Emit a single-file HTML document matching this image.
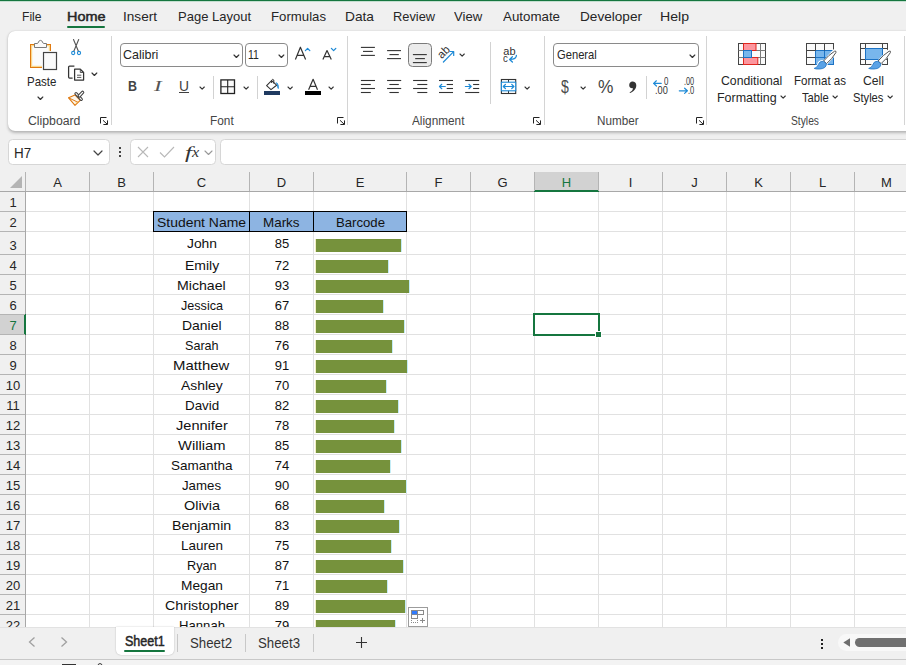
<!DOCTYPE html>
<html><head><meta charset="utf-8"><title>Excel</title>
<style>
html,body{margin:0;padding:0;}
body{width:906px;height:665px;overflow:hidden;position:relative;background:#f0f0f0;font-family:"Liberation Sans",sans-serif;}
.a{position:absolute;display:block;}
.t{position:absolute;white-space:nowrap;transform-origin:left center;}
</style></head><body>

<div class="a" style="left:0px;top:0px;width:906px;height:1px;background:#15763f;"></div>
<div class="a" style="left:0px;top:1px;width:906px;height:1px;background:#c4dfd0;"></div>
<div class="t" style="left:21.60px;top:6.50px;font-size:13.5px;line-height:20px;color:#262626;transform:scaleX(0.8965);">File</div>
<div class="t" style="left:66.80px;top:6.50px;font-size:13.5px;line-height:20px;color:#262626;-webkit-text-stroke:0.5px #262626;transform:scaleX(1.0691);">Home</div>
<div class="t" style="left:123.20px;top:6.50px;font-size:13.5px;line-height:20px;color:#262626;transform:scaleX(1.0070);">Insert</div>
<div class="t" style="left:178.20px;top:6.50px;font-size:13.5px;line-height:20px;color:#262626;transform:scaleX(0.9629);">Page Layout</div>
<div class="t" style="left:271.20px;top:6.50px;font-size:13.5px;line-height:20px;color:#262626;transform:scaleX(0.9776);">Formulas</div>
<div class="t" style="left:345.20px;top:6.50px;font-size:13.5px;line-height:20px;color:#262626;transform:scaleX(1.0170);">Data</div>
<div class="t" style="left:393.20px;top:6.50px;font-size:13.5px;line-height:20px;color:#262626;transform:scaleX(0.9489);">Review</div>
<div class="t" style="left:453.80px;top:6.50px;font-size:13.5px;line-height:20px;color:#262626;transform:scaleX(0.9719);">View</div>
<div class="t" style="left:502.60px;top:6.50px;font-size:13.5px;line-height:20px;color:#262626;transform:scaleX(0.9864);">Automate</div>
<div class="t" style="left:580.20px;top:6.50px;font-size:13.5px;line-height:20px;color:#262626;transform:scaleX(1.0076);">Developer</div>
<div class="t" style="left:660.20px;top:6.50px;font-size:13.5px;line-height:20px;color:#262626;transform:scaleX(1.0445);">Help</div>
<div class="a" style="left:67px;top:26px;width:38px;height:2px;background:#15763f;border-radius:1px;"></div>
<div class="a" style="left:8px;top:30.5px;width:920px;height:100px;background:#fff;border-radius:7px;box-shadow:0 1.5px 3px rgba(0,0,0,0.24),0 0 1px rgba(0,0,0,0.15);"></div>
<div class="a" style="left:111px;top:36px;width:1px;height:89px;background:#d4d4d4;"></div>
<div class="a" style="left:346.5px;top:36px;width:1px;height:89px;background:#d4d4d4;"></div>
<div class="a" style="left:544px;top:36px;width:1px;height:89px;background:#d4d4d4;"></div>
<div class="a" style="left:706px;top:36px;width:1px;height:89px;background:#d4d4d4;"></div>
<div class="a" style="left:904px;top:36px;width:1px;height:89px;background:#d4d4d4;"></div>
<div class="t" style="left:27.60px;top:111.20px;font-size:12px;line-height:20px;color:#454545;transform:scaleX(1.0202);">Clipboard</div>
<div class="t" style="left:210.00px;top:111.20px;font-size:12px;line-height:20px;color:#454545;transform:scaleX(0.9870);">Font</div>
<div class="t" style="left:412.30px;top:111.20px;font-size:12px;line-height:20px;color:#454545;transform:scaleX(0.9820);">Alignment</div>
<div class="t" style="left:596.80px;top:111.20px;font-size:12px;line-height:20px;color:#454545;transform:scaleX(0.9747);">Number</div>
<div class="t" style="left:791.40px;top:111.20px;font-size:12px;line-height:20px;color:#454545;transform:scaleX(0.8569);">Styles</div>
<svg class="a" style="left:100px;top:117px" width="9" height="9" viewBox="0 0 9 9"><path d="M0.5 6.5 V0.5 H6.5 M3 3.3 L7.2 7.2 M7.5 3.4 V7.5 H3.4" fill="none" stroke="#222" stroke-width="1"/></svg>
<svg class="a" style="left:336.5px;top:117px" width="9" height="9" viewBox="0 0 9 9"><path d="M0.5 6.5 V0.5 H6.5 M3 3.3 L7.2 7.2 M7.5 3.4 V7.5 H3.4" fill="none" stroke="#222" stroke-width="1"/></svg>
<svg class="a" style="left:533px;top:117px" width="9" height="9" viewBox="0 0 9 9"><path d="M0.5 6.5 V0.5 H6.5 M3 3.3 L7.2 7.2 M7.5 3.4 V7.5 H3.4" fill="none" stroke="#222" stroke-width="1"/></svg>
<svg class="a" style="left:695.5px;top:117px" width="9" height="9" viewBox="0 0 9 9"><path d="M0.5 6.5 V0.5 H6.5 M3 3.3 L7.2 7.2 M7.5 3.4 V7.5 H3.4" fill="none" stroke="#222" stroke-width="1"/></svg>
<svg class="a" style="left:28px;top:38px" width="32" height="34" viewBox="28 38 32 34"><rect x="30.5" y="44.5" width="20" height="23" fill="#fbfbfb" stroke="#e07a10"/><rect x="31.6" y="45.6" width="17.8" height="20.8" fill="none" stroke="#fad88c" stroke-width="1.2"/><path d="M34.5 47.5 V43.5 H37.3 C38.7 43.5 38.1 40.4 40.5 40.4 C42.9 40.4 42.3 43.5 43.7 43.5 H46.5 V47.5 Z" fill="#fafafa" stroke="#7a7a7a"/><rect x="42" y="51" width="16" height="20" fill="#fff"/><rect x="43.5" y="52.5" width="13" height="17" fill="#fafafa" stroke="#444" stroke-width="1.2"/></svg>
<div class="t" style="left:26.80px;top:71.60px;font-size:13.5px;line-height:20px;color:#262626;transform:scaleX(0.8516);">Paste</div>
<svg class="a" style="left:37.10px;top:95.75px" width="6.8" height="4.5" viewBox="-1 -1 6.8 4.5"><path d="M0 0 L2.4 2.5 L4.8 0" fill="none" stroke="#333" stroke-width="1.15" stroke-linecap="round" stroke-linejoin="round"/></svg>
<svg class="a" style="left:68px;top:36px" width="16" height="22" viewBox="68 36 16 22"><path d="M73.5 39.5 L78.4 51.2 M78.7 39.5 L73.8 51.2" stroke="#555" stroke-width="1.1" fill="none" stroke-linecap="round"/><circle cx="73.2" cy="53" r="1.6" fill="none" stroke="#1e8ad6" stroke-width="1.1"/><circle cx="79" cy="53" r="1.6" fill="none" stroke="#1e8ad6" stroke-width="1.1"/></svg>
<svg class="a" style="left:66px;top:63px" width="20" height="20" viewBox="66 63 20 20"><path d="M74.4 66.1 H69.6 Q68.6 66.1 68.6 67.1 V77 Q68.6 78 69.6 78 H72.6" fill="none" stroke="#333" stroke-width="1.25"/><path d="M74.6 69.2 H80.3 L83.6 72.5 V80.1 H74.6 Z" fill="#fff" stroke="#333" stroke-width="1.25" stroke-linejoin="round"/><path d="M80.3 69.2 V72.5 H83.6" fill="none" stroke="#444" stroke-width="0.9"/><path d="M77 75.2 H81.3 M77 77.4 H81.3" stroke="#444" stroke-width="0.9"/></svg>
<svg class="a" style="left:90.90px;top:71.75px" width="6.8" height="4.5" viewBox="-1 -1 6.8 4.5"><path d="M0 0 L2.4 2.5 L4.8 0" fill="none" stroke="#333" stroke-width="1.15" stroke-linecap="round" stroke-linejoin="round"/></svg>
<svg class="a" style="left:66px;top:88px" width="22" height="22" viewBox="66 88 22 22"><path d="M74.9 94.9 L68.6 97.8 L75 105.3 L80.2 100.4 Z" fill="#fdf7ee" stroke="#e07a10" stroke-width="1.1" stroke-linejoin="round"/><path d="M68.6 97.8 L78 102.3" stroke="#e07a10" stroke-width="1" fill="none"/><path d="M74.6 103.8 L76.3 101.8 L77.8 102.6 Z" fill="#fbd98a"/><path d="M76 93.6 L81.3 99.4" stroke="#444" stroke-width="3.2" stroke-linecap="round"/><path d="M76 93.6 L81.3 99.4" stroke="#fff" stroke-width="1.1" stroke-linecap="round"/><path d="M79.2 96 L82.6 92.4" stroke="#444" stroke-width="3.4" stroke-linecap="round"/><path d="M79.4 95.8 L82.6 92.4" stroke="#fff" stroke-width="1.3" stroke-linecap="round"/></svg>
<div class="a" style="left:120px;top:43px;width:123px;height:23.5px;background:#fff;border:1px solid #8a8a8a;border-radius:4px;box-sizing:border-box;"></div>
<div class="t" style="left:122.80px;top:45.20px;font-size:13px;line-height:20px;color:#262626;transform:scaleX(0.9608);">Calibri</div>
<svg class="a" style="left:233.30px;top:53.85px" width="6.8" height="4.5" viewBox="-1 -1 6.8 4.5"><path d="M0 0 L2.4 2.5 L4.8 0" fill="none" stroke="#333" stroke-width="1.15" stroke-linecap="round" stroke-linejoin="round"/></svg>
<div class="a" style="left:245px;top:43px;width:42.5px;height:23.5px;background:#fff;border:1px solid #8a8a8a;border-radius:4px;box-sizing:border-box;"></div>
<div class="t" style="left:247.80px;top:45.20px;font-size:13px;line-height:20px;color:#262626;transform:scaleX(0.8076);">11</div>
<svg class="a" style="left:278.30px;top:53.85px" width="6.8" height="4.5" viewBox="-1 -1 6.8 4.5"><path d="M0 0 L2.4 2.5 L4.8 0" fill="none" stroke="#333" stroke-width="1.15" stroke-linecap="round" stroke-linejoin="round"/></svg>
<svg class="a" style="left:292px;top:44px" width="48" height="18" viewBox="292 44 48 18"><path d="M295.4 59.5 L300.4 47.2 L305.6 59.5 M297.2 55.3 H303.7" fill="none" stroke="#333" stroke-width="1.2" stroke-linejoin="round"/><path d="M305.4 50.6 L307.6 48.4 L309.8 50.6" fill="none" stroke="#1e8ad6" stroke-width="1.3" stroke-linecap="round" stroke-linejoin="round"/><path d="M322.9 59.5 L327 50.5 L331.3 59.5 M324.3 56.6 H329.9" fill="none" stroke="#333" stroke-width="1.2" stroke-linejoin="round"/><path d="M331.4 48.4 L333.6 50.6 L335.8 48.4" fill="none" stroke="#1e8ad6" stroke-width="1.3" stroke-linecap="round" stroke-linejoin="round"/></svg>
<div class="t" style="left:127.80px;top:76.40px;font-size:14.3px;line-height:20px;color:#444;font-weight:bold;transform:scaleX(0.8707);">B</div>
<div class="t" style="left:154.20px;top:76.00px;font-size:14.2px;line-height:20px;color:#555;font-style:italic;font-family:'Liberation Serif', serif;transform:scaleX(1.6086);">I</div>
<div class="t" style="left:178.60px;top:76.00px;font-size:14.3px;line-height:20px;color:#404040;transform:scaleX(0.9675);">U</div>
<div class="a" style="left:179px;top:92px;width:9.5px;height:1px;background:#404040;"></div>
<svg class="a" style="left:199.15px;top:85.60px" width="6.3" height="4.2" viewBox="-1 -1 6.3 4.2"><path d="M0 0 L2.15 2.2 L4.3 0" fill="none" stroke="#333" stroke-width="1.1" stroke-linecap="round" stroke-linejoin="round"/></svg>
<div class="a" style="left:213px;top:75.5px;width:1px;height:23px;background:#d2d2d2;"></div>
<svg class="a" style="left:219px;top:78px" width="18" height="18" viewBox="219 78 18 18"><rect x="220.9" y="79.9" width="13.6" height="13.6" fill="#fafafa" stroke="#222" stroke-width="1.3"/><path d="M227.7 80 V93.5 M221 86.7 H234.5" stroke="#222" stroke-width="1.1"/></svg>
<svg class="a" style="left:243.15px;top:85.60px" width="6.3" height="4.2" viewBox="-1 -1 6.3 4.2"><path d="M0 0 L2.15 2.2 L4.3 0" fill="none" stroke="#333" stroke-width="1.1" stroke-linecap="round" stroke-linejoin="round"/></svg>
<div class="a" style="left:257px;top:75.5px;width:1px;height:23px;background:#d2d2d2;"></div>
<div class="a" style="left:264px;top:91px;width:16px;height:3.7px;background:#1f3a60;"></div>
<svg class="a" style="left:264px;top:78px" width="18" height="13" viewBox="264 78 18 13"><path d="M266.6 85.6 L271.6 80.6 L276.6 85.2 L271 89.6 Z" fill="#fff" stroke="#333" stroke-width="1.1" stroke-linejoin="round"/><path d="M271.6 83 V80.2 Q272.6 78.6 273.8 80 V83.6" fill="none" stroke="#333" stroke-width="1"/><path d="M276.4 82.6 Q279 84.5 278.3 88.6 Q277.2 86.5 277.4 84.6 Z" fill="#1e8ad6" stroke="#1e8ad6" stroke-width="0.8"/></svg>
<svg class="a" style="left:287.35px;top:85.60px" width="6.3" height="4.2" viewBox="-1 -1 6.3 4.2"><path d="M0 0 L2.15 2.2 L4.3 0" fill="none" stroke="#333" stroke-width="1.1" stroke-linecap="round" stroke-linejoin="round"/></svg>
<div class="a" style="left:305px;top:91px;width:16px;height:3.8px;background:#000;"></div>
<svg class="a" style="left:306px;top:77px" width="14" height="14" viewBox="306 77 14 14"><path d="M308.6 89.7 L313.1 79.3 L317.5 89.7 M310 86.4 H316.1" fill="none" stroke="#333" stroke-width="1.2" stroke-linejoin="round"/></svg>
<svg class="a" style="left:328.35px;top:85.60px" width="6.3" height="4.2" viewBox="-1 -1 6.3 4.2"><path d="M0 0 L2.15 2.2 L4.3 0" fill="none" stroke="#333" stroke-width="1.1" stroke-linecap="round" stroke-linejoin="round"/></svg>
<div class="a" style="left:408px;top:43px;width:24px;height:24px;background:#ebebeb;border:1px solid #7a7a7a;border-radius:4.5px;box-sizing:border-box;"></div>
<svg class="a" style="left:356px;top:40px" width="130" height="60" viewBox="356 40 130 60"><path d="M360.9 47.4 H374.9" stroke="#333" stroke-width="1.1"/><path d="M363 51.4 H372.8" stroke="#333" stroke-width="1.1"/><path d="M360.9 55.4 H374.9" stroke="#333" stroke-width="1.1"/><path d="M387.1 50.6 H401" stroke="#333" stroke-width="1.1"/><path d="M389.5 54.6 H398.8" stroke="#333" stroke-width="1.1"/><path d="M387.1 58.6 H401" stroke="#333" stroke-width="1.1"/><path d="M360.9 80.5 H375" stroke="#333" stroke-width="1.1"/><path d="M360.9 84.5 H370.8" stroke="#333" stroke-width="1.1"/><path d="M360.9 88.5 H375" stroke="#333" stroke-width="1.1"/><path d="M360.9 92.5 H370.8" stroke="#333" stroke-width="1.1"/><path d="M387.1 80.5 H401.2" stroke="#333" stroke-width="1.1"/><path d="M389.4 84.5 H398.8" stroke="#333" stroke-width="1.1"/><path d="M387.1 88.5 H401.2" stroke="#333" stroke-width="1.1"/><path d="M389.4 92.5 H398.8" stroke="#333" stroke-width="1.1"/><path d="M413.1 80.5 H427.3" stroke="#333" stroke-width="1.1"/><path d="M417.3 84.5 H427.3" stroke="#333" stroke-width="1.1"/><path d="M413.1 88.5 H427.3" stroke="#333" stroke-width="1.1"/><path d="M417.3 92.5 H427.3" stroke="#333" stroke-width="1.1"/><path d="M439 80.5 H453" stroke="#333" stroke-width="1.1"/><path d="M446.7 84.5 H453" stroke="#333" stroke-width="1.1"/><path d="M446.7 88.5 H453" stroke="#333" stroke-width="1.1"/><path d="M439 92.5 H453" stroke="#333" stroke-width="1.1"/><path d="M445.3 86.5 H439.6 M441.8 84.3 L439.5 86.5 L441.8 88.7" fill="none" stroke="#1e8ad6" stroke-width="1.2" stroke-linecap="round" stroke-linejoin="round"/><path d="M465.2 80.5 H479.2" stroke="#333" stroke-width="1.1"/><path d="M473.1 84.5 H479.2" stroke="#333" stroke-width="1.1"/><path d="M473.1 88.5 H479.2" stroke="#333" stroke-width="1.1"/><path d="M465.2 92.5 H479.2" stroke="#333" stroke-width="1.1"/><path d="M465.4 86.5 H471.1 M468.9 84.3 L471.2 86.5 L468.9 88.7" fill="none" stroke="#1e8ad6" stroke-width="1.2" stroke-linecap="round" stroke-linejoin="round"/></svg>
<svg class="a" style="left:408px;top:43px" width="24" height="24" viewBox="408 43 24 24"><path d="M412.9 54.6 H426.8" stroke="#333" stroke-width="1.1"/><path d="M415.2 58.6 H424.9" stroke="#333" stroke-width="1.1"/><path d="M412.9 62.6 H426.8" stroke="#333" stroke-width="1.1"/></svg>
<div class="t" style="left:436.5px;top:45.2px;font-size:11.5px;line-height:14px;color:#333;transform-origin:center center;transform:rotate(-45deg);">ab</div>
<svg class="a" style="left:440px;top:46px" width="18" height="18" viewBox="440 46 18 18"><path d="M443.4 62 L453.4 51.8 M449.8 51.5 H453.7 V55.4" fill="none" stroke="#1e8ad6" stroke-width="1.2" stroke-linecap="round" stroke-linejoin="round"/></svg>
<svg class="a" style="left:459.35px;top:53.10px" width="6.3" height="4.2" viewBox="-1 -1 6.3 4.2"><path d="M0 0 L2.15 2.2 L4.3 0" fill="none" stroke="#333" stroke-width="1.1" stroke-linecap="round" stroke-linejoin="round"/></svg>
<div class="a" style="left:490.3px;top:42px;width:1px;height:62px;background:#d2d2d2;"></div>
<div class="t" style="left:503.30px;top:40.80px;font-size:11px;line-height:20px;color:#333;">ab</div>
<div class="t" style="left:503.30px;top:47.70px;font-size:11px;line-height:20px;color:#333;transform:scaleX(0.8727);">c</div>
<svg class="a" style="left:506px;top:52px" width="14" height="12" viewBox="506 52 14 12"><path d="M516.4 55.3 Q516.6 59.3 509.8 59.4 M512.4 56.8 L509.6 59.4 L512.4 62" fill="none" stroke="#1e8ad6" stroke-width="1.3" stroke-linecap="round" stroke-linejoin="round"/></svg>
<svg class="a" style="left:499px;top:77px" width="20" height="19" viewBox="499 77 20 19"><rect x="501.4" y="79.5" width="14.3" height="14" fill="#fff" stroke="#333" stroke-width="1.1"/><path d="M508.5 79.5 V93.5" stroke="#333" stroke-width="1"/><rect x="501.4" y="82.2" width="14.3" height="8.6" fill="#fff" stroke="#1e8ad6" stroke-width="1.1"/><path d="M503.4 86.5 H513.8 M505.4 84.5 L503.3 86.5 L505.4 88.5 M511.8 84.5 L513.9 86.5 L511.8 88.5" fill="none" stroke="#1e8ad6" stroke-width="1.2" stroke-linecap="round" stroke-linejoin="round"/></svg>
<svg class="a" style="left:524.25px;top:85.70px" width="6.3" height="4.2" viewBox="-1 -1 6.3 4.2"><path d="M0 0 L2.15 2.2 L4.3 0" fill="none" stroke="#333" stroke-width="1.1" stroke-linecap="round" stroke-linejoin="round"/></svg>
<div class="a" style="left:553px;top:43px;width:145.8px;height:24px;background:#fff;border:1px solid #8a8a8a;border-radius:4px;box-sizing:border-box;"></div>
<div class="t" style="left:556.80px;top:45.20px;font-size:13px;line-height:20px;color:#262626;transform:scaleX(0.8605);">General</div>
<svg class="a" style="left:689.00px;top:53.85px" width="6.8" height="4.5" viewBox="-1 -1 6.8 4.5"><path d="M0 0 L2.4 2.5 L4.8 0" fill="none" stroke="#333" stroke-width="1.15" stroke-linecap="round" stroke-linejoin="round"/></svg>
<div class="t" style="left:560.60px;top:77.30px;font-size:17.5px;line-height:20px;color:#4a4a4a;transform:scaleX(0.8014);">$</div>
<svg class="a" style="left:580.25px;top:85.60px" width="6.3" height="4.2" viewBox="-1 -1 6.3 4.2"><path d="M0 0 L2.15 2.2 L4.3 0" fill="none" stroke="#333" stroke-width="1.1" stroke-linecap="round" stroke-linejoin="round"/></svg>
<div class="t" style="left:598.30px;top:77.00px;font-size:17.5px;line-height:20px;color:#444;transform:scaleX(0.9897);">%</div>
<svg class="a" style="left:627px;top:80px" width="12" height="15" viewBox="627 80 12 15"><path d="M631.9 81.6 C634.2 81.3 636.4 82.8 636.3 85.6 C636.2 89 633.6 91.8 630 93 L629.6 92.2 C631.8 91.2 633 89.6 633 88.2 C630.8 88.6 629.2 87.2 629.2 85.2 C629.2 83.2 630.4 81.9 631.9 81.6 Z" fill="#333"/></svg>
<div class="a" style="left:646px;top:75.5px;width:1px;height:23px;background:#d2d2d2;"></div>
<svg class="a" style="left:652px;top:80px" width="10" height="8" viewBox="652 80 10 8"><path d="M661.2 83.4 H653.6 M656.4 80.8 L653.6 83.4 L656.4 86" fill="none" stroke="#1e8ad6" stroke-width="1.2" stroke-linecap="round" stroke-linejoin="round"/></svg>
<div class="t" style="left:663.70px;top:72.40px;font-size:10.2px;line-height:20px;color:#333;transform:scaleX(0.7766);">0</div>
<div class="t" style="left:655.20px;top:80.80px;font-size:10.2px;line-height:20px;color:#333;transform:scaleX(0.9038);">.00</div>
<div class="t" style="left:684.10px;top:72.40px;font-size:10.2px;line-height:20px;color:#333;transform:scaleX(0.7202);">.00</div>
<svg class="a" style="left:678px;top:87px" width="11" height="8" viewBox="678 87 11 8"><path d="M679.3 90.8 H687.4 M684.6 88.2 L687.4 90.8 L684.6 93.4" fill="none" stroke="#1e8ad6" stroke-width="1.2" stroke-linecap="round" stroke-linejoin="round"/></svg>
<div class="t" style="left:688.00px;top:80.80px;font-size:10.2px;line-height:20px;color:#333;transform:scaleX(0.7415);">.0</div>
<svg class="a" style="left:736px;top:41px" width="32" height="26" viewBox="736 41 32 26"><rect x="738.5" y="43.5" width="27" height="21" fill="#fafafa" stroke="#444"/><path d="M743.5 43.5 V64.5 M760.5 43.5 V64.5 M738.5 50.5 H765.5 M738.5 57.5 H765.5" stroke="#7a7a7a" stroke-width="1" fill="none"/><rect x="743.5" y="43.5" width="12.5" height="7" fill="#fc969e" stroke="#e0261e"/><rect x="743.5" y="57.5" width="14.3" height="7" fill="#fc969e" stroke="#e0261e"/><rect x="743.5" y="50.5" width="8" height="7" fill="#78b6ec" stroke="#1c72c4"/></svg>
<div class="t" style="left:721.00px;top:71.30px;font-size:13.5px;line-height:20px;color:#262626;transform:scaleX(0.9076);">Conditional</div>
<div class="t" style="left:717.00px;top:88.00px;font-size:13.5px;line-height:20px;color:#262626;transform:scaleX(0.9237);">Formatting</div>
<svg class="a" style="left:779.65px;top:94.90px" width="6.3" height="4.2" viewBox="-1 -1 6.3 4.2"><path d="M0 0 L2.15 2.2 L4.3 0" fill="none" stroke="#333" stroke-width="1.1" stroke-linecap="round" stroke-linejoin="round"/></svg>
<svg class="a" style="left:804px;top:41px" width="36" height="30" viewBox="804 41 36 30"><rect x="806.5" y="43.5" width="27" height="21" fill="#fafafa" stroke="#444"/><rect x="815.5" y="50.5" width="18" height="14" fill="#78b6ec" stroke="#1c72c4"/><path d="M824.5 50.5 V64.5 M815.5 57.5 H833.5" stroke="#1c72c4" stroke-width="1"/><path d="M815.5 43.5 V50.5 M824.5 43.5 V50.5 M806.5 50.5 H815.5 M806.5 57.5 H815.5" stroke="#444" stroke-width="1" fill="none"/><g transform="translate(0 0)"><path d="M835.4 51.4 L825 62.6" stroke="#fff" stroke-width="5.5" stroke-linecap="round"/><path d="M823.4 61.2 L826.4 63.8 Q826.4 68.6 819.6 69 Q815.6 69.2 814.2 68.4 Q817.6 67.6 818.4 64.4 Q819.4 61 823.4 61.2 Z" fill="#fff" stroke="#fff" stroke-width="2.6"/><path d="M834.6 51.2 Q836.4 50.4 835.9 52.6 Q832 59 826.6 63.6 L823.6 61 Q828.6 55 834.6 51.2 Z" fill="#fff" stroke="#555" stroke-width="1"/><path d="M823.4 61.2 L826.4 63.8 Q826.4 68.6 819.6 69 Q815.6 69.2 814.2 68.4 Q817.6 67.6 818.4 64.4 Q819.4 61 823.4 61.2 Z" fill="#5aa2e6" stroke="#1c72c4" stroke-width="0.8"/></g></svg>
<div class="t" style="left:794.40px;top:71.30px;font-size:13.5px;line-height:20px;color:#262626;transform:scaleX(0.8558);">Format as</div>
<div class="t" style="left:801.60px;top:88.00px;font-size:13.5px;line-height:20px;color:#262626;transform:scaleX(0.8304);">Table</div>
<svg class="a" style="left:831.55px;top:94.90px" width="6.3" height="4.2" viewBox="-1 -1 6.3 4.2"><path d="M0 0 L2.15 2.2 L4.3 0" fill="none" stroke="#333" stroke-width="1.1" stroke-linecap="round" stroke-linejoin="round"/></svg>
<svg class="a" style="left:858px;top:41px" width="36" height="30" viewBox="858 41 36 30"><rect x="860.5" y="43.5" width="27" height="21" fill="#fafafa" stroke="#444"/><path d="M865.5 43.5 V64.5 M882.5 43.5 V64.5 M860.5 48.5 H887.5 M860.5 59.5 H887.5" stroke="#444" stroke-width="1" fill="none"/><rect x="865.5" y="48.5" width="17" height="11" fill="#78b6ec" stroke="#1c72c4"/><g transform="translate(54.5 0)"><path d="M835.4 51.4 L825 62.6" stroke="#fff" stroke-width="5.5" stroke-linecap="round"/><path d="M823.4 61.2 L826.4 63.8 Q826.4 68.6 819.6 69 Q815.6 69.2 814.2 68.4 Q817.6 67.6 818.4 64.4 Q819.4 61 823.4 61.2 Z" fill="#fff" stroke="#fff" stroke-width="2.6"/><path d="M834.6 51.2 Q836.4 50.4 835.9 52.6 Q832 59 826.6 63.6 L823.6 61 Q828.6 55 834.6 51.2 Z" fill="#fff" stroke="#555" stroke-width="1"/><path d="M823.4 61.2 L826.4 63.8 Q826.4 68.6 819.6 69 Q815.6 69.2 814.2 68.4 Q817.6 67.6 818.4 64.4 Q819.4 61 823.4 61.2 Z" fill="#5aa2e6" stroke="#1c72c4" stroke-width="0.8"/></g></svg>
<div class="t" style="left:863.40px;top:71.30px;font-size:13.5px;line-height:20px;color:#262626;transform:scaleX(0.9030);">Cell</div>
<div class="t" style="left:852.80px;top:88.00px;font-size:13.5px;line-height:20px;color:#262626;transform:scaleX(0.8269);">Styles</div>
<svg class="a" style="left:886.75px;top:94.90px" width="6.3" height="4.2" viewBox="-1 -1 6.3 4.2"><path d="M0 0 L2.15 2.2 L4.3 0" fill="none" stroke="#333" stroke-width="1.1" stroke-linecap="round" stroke-linejoin="round"/></svg>
<div class="a" style="left:8px;top:139px;width:101.5px;height:25.5px;background:#fff;border:1px solid #d6d6d6;border-radius:4.5px;box-sizing:border-box;"></div>
<div class="t" style="left:14.40px;top:142.60px;font-size:14px;line-height:20px;color:#262626;transform:scaleX(0.9611);">H7</div>
<svg class="a" style="left:93.20px;top:149.50px" width="10" height="6" viewBox="-1 -1 10 6"><path d="M0 0 L4.0 4 L8 0" fill="none" stroke="#444" stroke-width="1.2" stroke-linecap="round" stroke-linejoin="round"/></svg>
<div class="a" style="left:119px;top:147px;width:2px;height:2px;background:#444;"></div>
<div class="a" style="left:119px;top:151px;width:2px;height:2px;background:#444;"></div>
<div class="a" style="left:119px;top:155px;width:2px;height:2px;background:#444;"></div>
<div class="a" style="left:130px;top:139px;width:86px;height:25.5px;background:#fff;border:1px solid #d6d6d6;border-radius:4.5px;box-sizing:border-box;"></div>
<svg class="a" style="left:137px;top:146px" width="12" height="12" viewBox="0 0 12 12"><path d="M1 1 L11 11 M11 1 L1 11" stroke="#b8b8b8" stroke-width="1.1" fill="none"/></svg>
<svg class="a" style="left:159px;top:146px" width="16" height="12" viewBox="0 0 16 12"><path d="M1 6.5 L5.5 11 L15 1" stroke="#b8b8b8" stroke-width="1.1" fill="none"/></svg>
<div class="t" style="left:184.60px;top:141.50px;font-size:17.5px;line-height:20px;color:#333;font-style:italic;font-family:'Liberation Serif', serif;transform:scaleX(1.4396);">f</div>
<div class="t" style="left:191.60px;top:143.00px;font-size:14px;line-height:20px;color:#333;font-style:italic;font-family:'Liberation Serif', serif;transform:scaleX(1.1587);">x</div>
<svg class="a" style="left:204.00px;top:149.75px" width="9" height="5.5" viewBox="-1 -1 9 5.5"><path d="M0 0 L3.5 3.5 L7 0" fill="none" stroke="#999" stroke-width="1.1" stroke-linecap="round" stroke-linejoin="round"/></svg>
<div class="a" style="left:220px;top:139px;width:700px;height:25.5px;background:#fff;border:1px solid #d6d6d6;border-radius:4.5px;box-sizing:border-box;"></div>
<div class="a" style="left:0px;top:172px;width:906px;height:455px;background:#fff;"></div>
<div class="a" style="left:0px;top:172px;width:906px;height:19px;background:#f0f0f0;"></div>
<div class="a" style="left:0px;top:191px;width:906px;height:1px;background:#a8a8a8;"></div>
<div class="a" style="left:0px;top:192px;width:25px;height:435px;background:#f0f0f0;"></div>
<div class="a" style="left:25px;top:192px;width:1px;height:435px;background:#a8a8a8;"></div>
<svg class="a" style="left:9px;top:175px" width="14" height="14" viewBox="0 0 14 14"><path d="M13 1 V13 H1 Z" fill="#b4b4b4"/></svg>
<div class="a" style="left:535px;top:172px;width:63px;height:18px;background:#d2d2d2;"></div>
<div class="a" style="left:534px;top:190px;width:65px;height:2px;background:#15763f;"></div>
<div class="a" style="left:0px;top:315px;width:24px;height:19px;background:#d2d2d2;"></div>
<div class="a" style="left:24px;top:314px;width:2px;height:21px;background:#15763f;"></div>
<div class="a" style="left:25px;top:172px;width:1px;height:19px;background:#b4b4b4;"></div>
<div class="t" style="left:53.16px;top:173.00px;font-size:13px;line-height:20px;color:#262626;">A</div>
<div class="a" style="left:89px;top:172px;width:1px;height:19px;background:#b4b4b4;"></div>
<div class="t" style="left:117.16px;top:173.00px;font-size:13px;line-height:20px;color:#262626;">B</div>
<div class="a" style="left:153px;top:172px;width:1px;height:19px;background:#b4b4b4;"></div>
<div class="t" style="left:196.81px;top:173.00px;font-size:13px;line-height:20px;color:#262626;">C</div>
<div class="a" style="left:249px;top:172px;width:1px;height:19px;background:#b4b4b4;"></div>
<div class="t" style="left:276.81px;top:173.00px;font-size:13px;line-height:20px;color:#262626;">D</div>
<div class="a" style="left:313px;top:172px;width:1px;height:19px;background:#b4b4b4;"></div>
<div class="t" style="left:355.66px;top:173.00px;font-size:13px;line-height:20px;color:#262626;">E</div>
<div class="a" style="left:406px;top:172px;width:1px;height:19px;background:#b4b4b4;"></div>
<div class="t" style="left:434.53px;top:173.00px;font-size:13px;line-height:20px;color:#262626;">F</div>
<div class="a" style="left:470px;top:172px;width:1px;height:19px;background:#b4b4b4;"></div>
<div class="t" style="left:497.44px;top:173.00px;font-size:13px;line-height:20px;color:#262626;">G</div>
<div class="a" style="left:534px;top:172px;width:1px;height:19px;background:#b4b4b4;"></div>
<div class="t" style="left:561.81px;top:173.00px;font-size:13px;line-height:20px;color:#15763f;">H</div>
<div class="a" style="left:598px;top:172px;width:1px;height:19px;background:#b4b4b4;"></div>
<div class="t" style="left:628.69px;top:173.00px;font-size:13px;line-height:20px;color:#262626;">I</div>
<div class="a" style="left:662px;top:172px;width:1px;height:19px;background:#b4b4b4;"></div>
<div class="t" style="left:691.25px;top:173.00px;font-size:13px;line-height:20px;color:#262626;">J</div>
<div class="a" style="left:726px;top:172px;width:1px;height:19px;background:#b4b4b4;"></div>
<div class="t" style="left:754.16px;top:173.00px;font-size:13px;line-height:20px;color:#262626;">K</div>
<div class="a" style="left:790px;top:172px;width:1px;height:19px;background:#b4b4b4;"></div>
<div class="t" style="left:818.88px;top:173.00px;font-size:13px;line-height:20px;color:#262626;">L</div>
<div class="a" style="left:854px;top:172px;width:1px;height:19px;background:#b4b4b4;"></div>
<div class="t" style="left:881.09px;top:173.00px;font-size:13px;line-height:20px;color:#262626;">M</div>
<div class="a" style="left:89px;top:192px;width:1px;height:435px;background:#e1e1e1;"></div>
<div class="a" style="left:153px;top:192px;width:1px;height:435px;background:#e1e1e1;"></div>
<div class="a" style="left:249px;top:192px;width:1px;height:435px;background:#e1e1e1;"></div>
<div class="a" style="left:313px;top:192px;width:1px;height:435px;background:#e1e1e1;"></div>
<div class="a" style="left:406px;top:192px;width:1px;height:435px;background:#e1e1e1;"></div>
<div class="a" style="left:470px;top:192px;width:1px;height:435px;background:#e1e1e1;"></div>
<div class="a" style="left:534px;top:192px;width:1px;height:435px;background:#e1e1e1;"></div>
<div class="a" style="left:598px;top:192px;width:1px;height:435px;background:#e1e1e1;"></div>
<div class="a" style="left:662px;top:192px;width:1px;height:435px;background:#e1e1e1;"></div>
<div class="a" style="left:726px;top:192px;width:1px;height:435px;background:#e1e1e1;"></div>
<div class="a" style="left:790px;top:192px;width:1px;height:435px;background:#e1e1e1;"></div>
<div class="a" style="left:854px;top:192px;width:1px;height:435px;background:#e1e1e1;"></div>
<div class="a" style="left:26px;top:211px;width:880px;height:1px;background:#e1e1e1;"></div>
<div class="a" style="left:0px;top:211px;width:25px;height:1px;background:#b4b4b4;"></div>
<div class="t" style="left:9.38px;top:193.00px;font-size:13px;line-height:20px;color:#262626;">1</div>
<div class="a" style="left:26px;top:231px;width:880px;height:1px;background:#e1e1e1;"></div>
<div class="a" style="left:0px;top:231px;width:25px;height:1px;background:#b4b4b4;"></div>
<div class="t" style="left:9.38px;top:213.00px;font-size:13px;line-height:20px;color:#262626;">2</div>
<div class="a" style="left:26px;top:254px;width:880px;height:1px;background:#e1e1e1;"></div>
<div class="a" style="left:0px;top:254px;width:25px;height:1px;background:#b4b4b4;"></div>
<div class="t" style="left:9.38px;top:236.00px;font-size:13px;line-height:20px;color:#262626;">3</div>
<div class="a" style="left:26px;top:274px;width:880px;height:1px;background:#e1e1e1;"></div>
<div class="a" style="left:0px;top:274px;width:25px;height:1px;background:#b4b4b4;"></div>
<div class="t" style="left:9.38px;top:256.00px;font-size:13px;line-height:20px;color:#262626;">4</div>
<div class="a" style="left:26px;top:294px;width:880px;height:1px;background:#e1e1e1;"></div>
<div class="a" style="left:0px;top:294px;width:25px;height:1px;background:#b4b4b4;"></div>
<div class="t" style="left:9.38px;top:276.00px;font-size:13px;line-height:20px;color:#262626;">5</div>
<div class="a" style="left:26px;top:314px;width:880px;height:1px;background:#e1e1e1;"></div>
<div class="a" style="left:0px;top:314px;width:25px;height:1px;background:#b4b4b4;"></div>
<div class="t" style="left:9.38px;top:296.00px;font-size:13px;line-height:20px;color:#262626;">6</div>
<div class="a" style="left:26px;top:334px;width:880px;height:1px;background:#e1e1e1;"></div>
<div class="a" style="left:0px;top:334px;width:25px;height:1px;background:#b4b4b4;"></div>
<div class="t" style="left:9.38px;top:316.00px;font-size:13px;line-height:20px;color:#15763f;">7</div>
<div class="a" style="left:26px;top:354px;width:880px;height:1px;background:#e1e1e1;"></div>
<div class="a" style="left:0px;top:354px;width:25px;height:1px;background:#b4b4b4;"></div>
<div class="t" style="left:9.38px;top:336.00px;font-size:13px;line-height:20px;color:#262626;">8</div>
<div class="a" style="left:26px;top:374px;width:880px;height:1px;background:#e1e1e1;"></div>
<div class="a" style="left:0px;top:374px;width:25px;height:1px;background:#b4b4b4;"></div>
<div class="t" style="left:9.38px;top:356.00px;font-size:13px;line-height:20px;color:#262626;">9</div>
<div class="a" style="left:26px;top:394px;width:880px;height:1px;background:#e1e1e1;"></div>
<div class="a" style="left:0px;top:394px;width:25px;height:1px;background:#b4b4b4;"></div>
<div class="t" style="left:5.77px;top:376.00px;font-size:13px;line-height:20px;color:#262626;">10</div>
<div class="a" style="left:26px;top:414px;width:880px;height:1px;background:#e1e1e1;"></div>
<div class="a" style="left:0px;top:414px;width:25px;height:1px;background:#b4b4b4;"></div>
<div class="t" style="left:6.25px;top:396.00px;font-size:13px;line-height:20px;color:#262626;">11</div>
<div class="a" style="left:26px;top:434px;width:880px;height:1px;background:#e1e1e1;"></div>
<div class="a" style="left:0px;top:434px;width:25px;height:1px;background:#b4b4b4;"></div>
<div class="t" style="left:5.77px;top:416.00px;font-size:13px;line-height:20px;color:#262626;">12</div>
<div class="a" style="left:26px;top:454px;width:880px;height:1px;background:#e1e1e1;"></div>
<div class="a" style="left:0px;top:454px;width:25px;height:1px;background:#b4b4b4;"></div>
<div class="t" style="left:5.77px;top:436.00px;font-size:13px;line-height:20px;color:#262626;">13</div>
<div class="a" style="left:26px;top:474px;width:880px;height:1px;background:#e1e1e1;"></div>
<div class="a" style="left:0px;top:474px;width:25px;height:1px;background:#b4b4b4;"></div>
<div class="t" style="left:5.77px;top:456.00px;font-size:13px;line-height:20px;color:#262626;">14</div>
<div class="a" style="left:26px;top:494px;width:880px;height:1px;background:#e1e1e1;"></div>
<div class="a" style="left:0px;top:494px;width:25px;height:1px;background:#b4b4b4;"></div>
<div class="t" style="left:5.77px;top:476.00px;font-size:13px;line-height:20px;color:#262626;">15</div>
<div class="a" style="left:26px;top:514px;width:880px;height:1px;background:#e1e1e1;"></div>
<div class="a" style="left:0px;top:514px;width:25px;height:1px;background:#b4b4b4;"></div>
<div class="t" style="left:5.77px;top:496.00px;font-size:13px;line-height:20px;color:#262626;">16</div>
<div class="a" style="left:26px;top:534px;width:880px;height:1px;background:#e1e1e1;"></div>
<div class="a" style="left:0px;top:534px;width:25px;height:1px;background:#b4b4b4;"></div>
<div class="t" style="left:5.77px;top:516.00px;font-size:13px;line-height:20px;color:#262626;">17</div>
<div class="a" style="left:26px;top:554px;width:880px;height:1px;background:#e1e1e1;"></div>
<div class="a" style="left:0px;top:554px;width:25px;height:1px;background:#b4b4b4;"></div>
<div class="t" style="left:5.77px;top:536.00px;font-size:13px;line-height:20px;color:#262626;">18</div>
<div class="a" style="left:26px;top:574px;width:880px;height:1px;background:#e1e1e1;"></div>
<div class="a" style="left:0px;top:574px;width:25px;height:1px;background:#b4b4b4;"></div>
<div class="t" style="left:5.77px;top:556.00px;font-size:13px;line-height:20px;color:#262626;">19</div>
<div class="a" style="left:26px;top:594px;width:880px;height:1px;background:#e1e1e1;"></div>
<div class="a" style="left:0px;top:594px;width:25px;height:1px;background:#b4b4b4;"></div>
<div class="t" style="left:5.77px;top:576.00px;font-size:13px;line-height:20px;color:#262626;">20</div>
<div class="a" style="left:26px;top:614px;width:880px;height:1px;background:#e1e1e1;"></div>
<div class="a" style="left:0px;top:614px;width:25px;height:1px;background:#b4b4b4;"></div>
<div class="t" style="left:5.77px;top:596.00px;font-size:13px;line-height:20px;color:#262626;">21</div>
<div class="t" style="left:5.77px;top:616.00px;font-size:13px;line-height:20px;color:#262626;">22</div>
<div class="a" style="left:153px;top:211px;width:254px;height:21px;background:#8db4e2;border:1px solid #000;box-sizing:border-box;"></div>
<div class="a" style="left:249px;top:211px;width:1px;height:21px;background:#000;"></div>
<div class="a" style="left:313px;top:211px;width:1px;height:21px;background:#000;"></div>
<div class="t" style="left:156.50px;top:213.00px;font-size:13px;line-height:20px;color:#111;transform:scaleX(1.0709);">Student Name</div>
<div class="t" style="left:263.25px;top:213.00px;font-size:13px;line-height:20px;color:#111;transform:scaleX(1.0314);">Marks</div>
<div class="t" style="left:335.50px;top:213.00px;font-size:13px;line-height:20px;color:#111;transform:scaleX(1.0119);">Barcode</div>
<div class="t" style="left:186.60px;top:234.00px;font-size:13px;line-height:20px;color:#111;transform:scaleX(1.0642);">John</div>
<div class="t" style="left:274.77px;top:234.00px;font-size:13px;line-height:20px;color:#111;">85</div>
<div class="a" style="left:315px;top:239px;width:87px;height:13px;background:linear-gradient(90deg,#f3efc4 0,#f3efc4 1px,#76923c 1px,#76923c 86px,#c4ecf6 86px);"></div>
<div class="t" style="left:184.50px;top:256.00px;font-size:13px;line-height:20px;color:#111;transform:scaleX(1.0762);">Emily</div>
<div class="t" style="left:274.77px;top:256.00px;font-size:13px;line-height:20px;color:#111;">72</div>
<div class="a" style="left:315px;top:260px;width:74px;height:13px;background:linear-gradient(90deg,#f3efc4 0,#f3efc4 1px,#76923c 1px,#76923c 73px,#c4ecf6 73px);"></div>
<div class="t" style="left:177.25px;top:276.00px;font-size:13px;line-height:20px;color:#111;transform:scaleX(1.0871);">Michael</div>
<div class="t" style="left:274.77px;top:276.00px;font-size:13px;line-height:20px;color:#111;">93</div>
<div class="a" style="left:315px;top:280px;width:95px;height:13px;background:linear-gradient(90deg,#f3efc4 0,#f3efc4 1px,#76923c 1px,#76923c 94px,#c4ecf6 94px);"></div>
<div class="t" style="left:180.60px;top:296.00px;font-size:13px;line-height:20px;color:#111;transform:scaleX(0.9689);">Jessica</div>
<div class="t" style="left:274.77px;top:296.00px;font-size:13px;line-height:20px;color:#111;">67</div>
<div class="a" style="left:315px;top:300px;width:69px;height:13px;background:linear-gradient(90deg,#f3efc4 0,#f3efc4 1px,#76923c 1px,#76923c 68px,#c4ecf6 68px);"></div>
<div class="t" style="left:181.85px;top:316.00px;font-size:13px;line-height:20px;color:#111;transform:scaleX(1.0717);">Daniel</div>
<div class="t" style="left:274.77px;top:316.00px;font-size:13px;line-height:20px;color:#111;">88</div>
<div class="a" style="left:315px;top:320px;width:90px;height:13px;background:linear-gradient(90deg,#f3efc4 0,#f3efc4 1px,#76923c 1px,#76923c 89px,#c4ecf6 89px);"></div>
<div class="t" style="left:184.80px;top:336.00px;font-size:13px;line-height:20px;color:#111;transform:scaleX(0.9685);">Sarah</div>
<div class="t" style="left:274.77px;top:336.00px;font-size:13px;line-height:20px;color:#111;">76</div>
<div class="a" style="left:315px;top:340px;width:78px;height:13px;background:linear-gradient(90deg,#f3efc4 0,#f3efc4 1px,#76923c 1px,#76923c 77px,#c4ecf6 77px);"></div>
<div class="t" style="left:173.45px;top:356.00px;font-size:13px;line-height:20px;color:#111;transform:scaleX(1.1459);">Matthew</div>
<div class="t" style="left:274.77px;top:356.00px;font-size:13px;line-height:20px;color:#111;">91</div>
<div class="a" style="left:315px;top:360px;width:93px;height:13px;background:linear-gradient(90deg,#f3efc4 0,#f3efc4 1px,#76923c 1px,#76923c 92px,#c4ecf6 92px);"></div>
<div class="t" style="left:180.70px;top:376.00px;font-size:13px;line-height:20px;color:#111;transform:scaleX(1.0712);">Ashley</div>
<div class="t" style="left:274.77px;top:376.00px;font-size:13px;line-height:20px;color:#111;">70</div>
<div class="a" style="left:315px;top:380px;width:72px;height:13px;background:linear-gradient(90deg,#f3efc4 0,#f3efc4 1px,#76923c 1px,#76923c 71px,#c4ecf6 71px);"></div>
<div class="t" style="left:184.50px;top:396.00px;font-size:13px;line-height:20px;color:#111;transform:scaleX(1.0289);">David</div>
<div class="t" style="left:274.77px;top:396.00px;font-size:13px;line-height:20px;color:#111;">82</div>
<div class="a" style="left:315px;top:400px;width:84px;height:13px;background:linear-gradient(90deg,#f3efc4 0,#f3efc4 1px,#76923c 1px,#76923c 83px,#c4ecf6 83px);"></div>
<div class="t" style="left:175.70px;top:416.00px;font-size:13px;line-height:20px;color:#111;transform:scaleX(1.1200);">Jennifer</div>
<div class="t" style="left:274.77px;top:416.00px;font-size:13px;line-height:20px;color:#111;">78</div>
<div class="a" style="left:315px;top:420px;width:80px;height:13px;background:linear-gradient(90deg,#f3efc4 0,#f3efc4 1px,#76923c 1px,#76923c 79px,#c4ecf6 79px);"></div>
<div class="t" style="left:177.85px;top:436.00px;font-size:13px;line-height:20px;color:#111;transform:scaleX(1.1341);">William</div>
<div class="t" style="left:274.77px;top:436.00px;font-size:13px;line-height:20px;color:#111;">85</div>
<div class="a" style="left:315px;top:440px;width:87px;height:13px;background:linear-gradient(90deg,#f3efc4 0,#f3efc4 1px,#76923c 1px,#76923c 86px,#c4ecf6 86px);"></div>
<div class="t" style="left:170.80px;top:456.00px;font-size:13px;line-height:20px;color:#111;transform:scaleX(1.0394);">Samantha</div>
<div class="t" style="left:274.77px;top:456.00px;font-size:13px;line-height:20px;color:#111;">74</div>
<div class="a" style="left:315px;top:460px;width:76px;height:13px;background:linear-gradient(90deg,#f3efc4 0,#f3efc4 1px,#76923c 1px,#76923c 75px,#c4ecf6 75px);"></div>
<div class="t" style="left:182.10px;top:476.00px;font-size:13px;line-height:20px;color:#111;transform:scaleX(1.0185);">James</div>
<div class="t" style="left:274.77px;top:476.00px;font-size:13px;line-height:20px;color:#111;">90</div>
<div class="a" style="left:315px;top:480px;width:92px;height:13px;background:linear-gradient(90deg,#f3efc4 0,#f3efc4 1px,#76923c 1px,#76923c 91px,#c4ecf6 91px);"></div>
<div class="t" style="left:183.60px;top:496.00px;font-size:13px;line-height:20px;color:#111;transform:scaleX(1.1074);">Olivia</div>
<div class="t" style="left:274.77px;top:496.00px;font-size:13px;line-height:20px;color:#111;">68</div>
<div class="a" style="left:315px;top:500px;width:70px;height:13px;background:linear-gradient(90deg,#f3efc4 0,#f3efc4 1px,#76923c 1px,#76923c 69px,#c4ecf6 69px);"></div>
<div class="t" style="left:172.00px;top:516.00px;font-size:13px;line-height:20px;color:#111;transform:scaleX(1.0923);">Benjamin</div>
<div class="t" style="left:274.77px;top:516.00px;font-size:13px;line-height:20px;color:#111;">83</div>
<div class="a" style="left:315px;top:520px;width:85px;height:13px;background:linear-gradient(90deg,#f3efc4 0,#f3efc4 1px,#76923c 1px,#76923c 84px,#c4ecf6 84px);"></div>
<div class="t" style="left:180.65px;top:536.00px;font-size:13px;line-height:20px;color:#111;transform:scaleX(1.0350);">Lauren</div>
<div class="t" style="left:274.77px;top:536.00px;font-size:13px;line-height:20px;color:#111;">75</div>
<div class="a" style="left:315px;top:540px;width:77px;height:13px;background:linear-gradient(90deg,#f3efc4 0,#f3efc4 1px,#76923c 1px,#76923c 76px,#c4ecf6 76px);"></div>
<div class="t" style="left:186.75px;top:556.00px;font-size:13px;line-height:20px;color:#111;transform:scaleX(0.9786);">Ryan</div>
<div class="t" style="left:274.77px;top:556.00px;font-size:13px;line-height:20px;color:#111;">87</div>
<div class="a" style="left:315px;top:560px;width:89px;height:13px;background:linear-gradient(90deg,#f3efc4 0,#f3efc4 1px,#76923c 1px,#76923c 88px,#c4ecf6 88px);"></div>
<div class="t" style="left:180.65px;top:576.00px;font-size:13px;line-height:20px;color:#111;transform:scaleX(1.0541);">Megan</div>
<div class="t" style="left:274.77px;top:576.00px;font-size:13px;line-height:20px;color:#111;">71</div>
<div class="a" style="left:315px;top:580px;width:73px;height:13px;background:linear-gradient(90deg,#f3efc4 0,#f3efc4 1px,#76923c 1px,#76923c 72px,#c4ecf6 72px);"></div>
<div class="t" style="left:164.90px;top:596.00px;font-size:13px;line-height:20px;color:#111;transform:scaleX(1.0923);">Christopher</div>
<div class="t" style="left:274.77px;top:596.00px;font-size:13px;line-height:20px;color:#111;">89</div>
<div class="a" style="left:315px;top:600px;width:91px;height:13px;background:linear-gradient(90deg,#f3efc4 0,#f3efc4 1px,#76923c 1px,#76923c 90px,#c4ecf6 90px);"></div>
<div class="t" style="left:178.60px;top:616.00px;font-size:13px;line-height:20px;color:#111;transform:scaleX(1.0101);">Hannah</div>
<div class="t" style="left:274.77px;top:616.00px;font-size:13px;line-height:20px;color:#111;">79</div>
<div class="a" style="left:315px;top:620px;width:81px;height:13px;background:linear-gradient(90deg,#f3efc4 0,#f3efc4 1px,#76923c 1px,#76923c 80px,#c4ecf6 80px);"></div>
<div class="a" style="left:533px;top:313px;width:67px;height:23px;border:2px solid #15763f;box-sizing:border-box;"></div>
<div class="a" style="left:595px;top:331px;width:7px;height:7px;background:#15763f;border:1px solid #fff;box-sizing:border-box;"></div>
<svg class="a" style="left:408px;top:607px" width="20" height="20" viewBox="0 0 20 20"><rect x="0.5" y="0.5" width="19" height="19" fill="#fff" stroke="#9c9c9c"/><rect x="3.5" y="3.5" width="12" height="4" fill="#fff" stroke="#8a8a8a"/><rect x="3.5" y="7.5" width="6" height="4" fill="#fff" stroke="#8a8a8a"/><rect x="4" y="4" width="5.5" height="3.2" fill="#2f7bff"/><path d="M9.5 3.5 V7.5" stroke="#8a8a8a"/><path d="M3 13 h1 v1 h-1z M9 13 h1 v1 h-1z M3 15 h1 v1 h-1z M5 15 h1 v1 h-1z M7 15 h1 v1 h-1z M9 15 h1 v1 h-1z" fill="#8a8a8a"/><path d="M12 13.5 H17 M14.5 11 V16" stroke="#8a8a8a" stroke-width="1"/></svg>
<div class="a" style="left:0px;top:627px;width:906px;height:38px;background:#f0f0f0;"></div>
<div class="a" style="left:0px;top:659px;width:906px;height:1px;background:#c8c8c8;"></div>
<div class="a" style="left:0px;top:660px;width:906px;height:5px;background:#f3f3f3;"></div>
<div class="a" style="left:0px;top:627px;width:906px;height:1px;background:#e2e2e2;"></div>
<div class="a" style="left:116px;top:627px;width:58px;height:28.3px;background:#fff;border-radius:0 0 5px 5px;box-shadow:0 0 1.5px rgba(0,0,0,0.3);"></div>
<div class="t" style="left:124.90px;top:630.60px;font-size:14.3px;line-height:20px;color:#262626;-webkit-text-stroke:0.5px #262626;transform:scaleX(0.8774);">Sheet1</div>
<div class="a" style="left:124px;top:650px;width:41px;height:2px;background:#15763f;border-radius:1px;"></div>
<div class="t" style="left:190.00px;top:633.30px;font-size:14.2px;line-height:20px;color:#333;transform:scaleX(0.9340);">Sheet2</div>
<div class="t" style="left:258.00px;top:633.30px;font-size:14.2px;line-height:20px;color:#333;transform:scaleX(0.9340);">Sheet3</div>
<div class="a" style="left:177px;top:634px;width:1px;height:18px;background:#c8c8c8;"></div>
<div class="a" style="left:245px;top:634px;width:1px;height:18px;background:#c8c8c8;"></div>
<div class="a" style="left:313px;top:634px;width:1px;height:18px;background:#c8c8c8;"></div>
<svg class="a" style="left:27px;top:636px" width="10" height="12" viewBox="0 0 10 12"><path d="M7.5 1.5 L2.5 6 L7.5 10.5" fill="none" stroke="#a0a0a0" stroke-width="1.3"/></svg>
<svg class="a" style="left:59px;top:636px" width="10" height="12" viewBox="0 0 10 12"><path d="M2.5 1.5 L7.5 6 L2.5 10.5" fill="none" stroke="#a0a0a0" stroke-width="1.3"/></svg>
<svg class="a" style="left:355px;top:636px" width="13" height="13" viewBox="0 0 13 13"><path d="M6.5 1 V12 M1 6.5 H12" stroke="#333" stroke-width="1.1" fill="none"/></svg>
<div class="a" style="left:821px;top:639px;width:2px;height:2px;background:#222;"></div>
<div class="a" style="left:821px;top:643px;width:2px;height:2px;background:#222;"></div>
<div class="a" style="left:821px;top:647px;width:2px;height:2px;background:#222;"></div>
<div class="a" style="left:838px;top:634px;width:90px;height:17px;background:#f8f8f8;border-radius:8.5px;"></div>
<svg class="a" style="left:843px;top:638px" width="8" height="9" viewBox="0 0 8 9"><path d="M7 0.3 V8.7 L0.3 4.5 Z" fill="#6e6e6e"/></svg>
<div class="a" style="left:855px;top:638px;width:70px;height:9px;background:#707070;border-radius:4.5px;"></div>
<div class="a" style="left:62px;top:664px;width:14px;height:1px;background:#333;"></div>
<svg class="a" style="left:97px;top:663px" width="6" height="2" viewBox="0 0 6 2"><circle cx="3" cy="2.6" r="2" fill="none" stroke="#333" stroke-width="1"/></svg>
</body></html>
